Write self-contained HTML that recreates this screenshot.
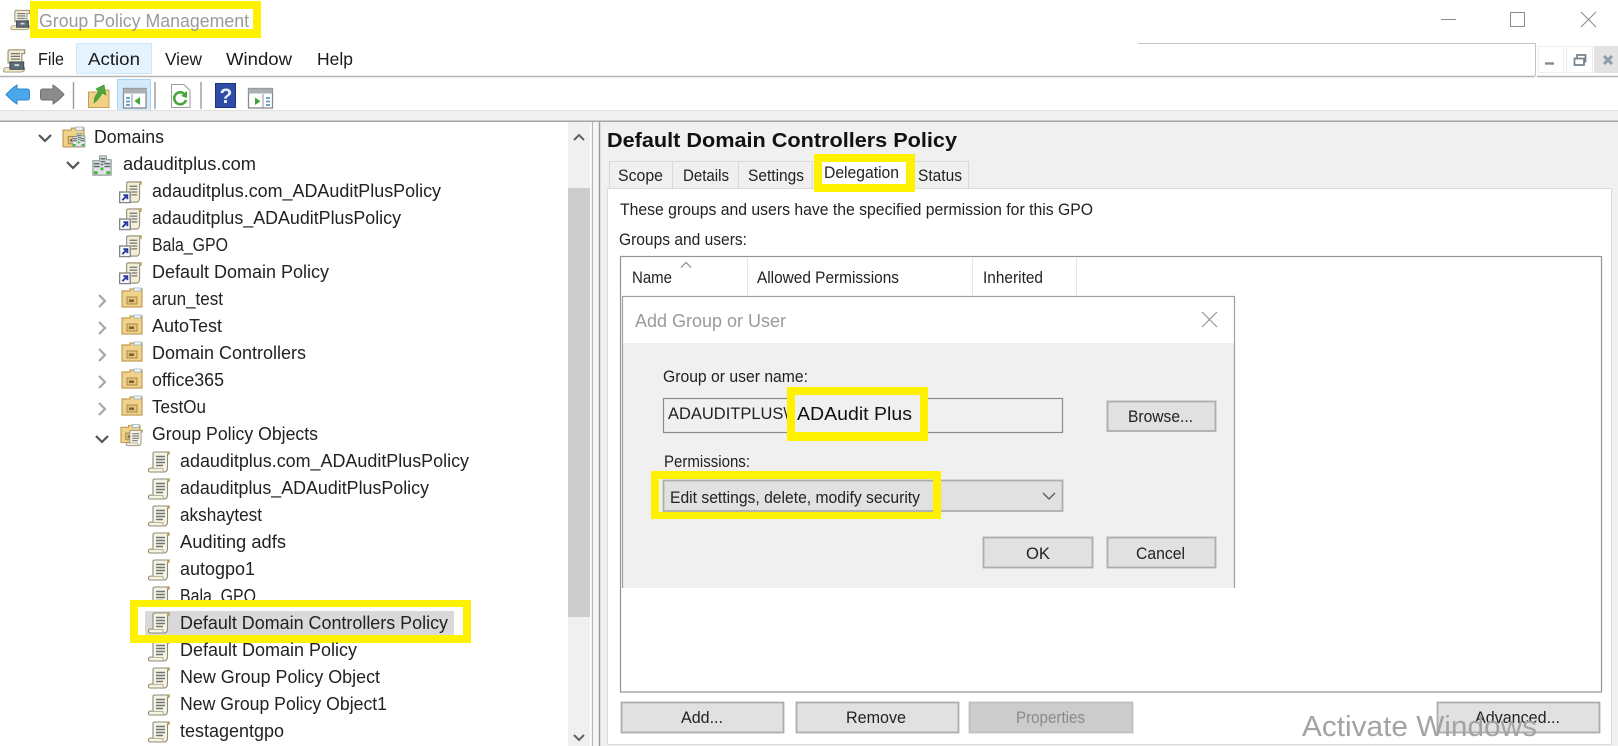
<!DOCTYPE html>
<html><head><meta charset="utf-8"><title>Group Policy Management</title>
<style>
html,body{margin:0;padding:0;background:#fff;width:1618px;height:746px;overflow:hidden}
svg{display:block;filter:blur(.35px)}
text{font-family:"Liberation Sans",sans-serif;fill:#1a1a1a;font-size:17.5px}
.t{font-size:18px;fill:#222}
.r{font-size:16.5px;fill:#222}
.b{fill:#e1e1e1;stroke:#adadad;stroke-width:1.8}
</style></head><body>
<svg width="1618" height="746" viewBox="0 0 1618 746" xmlns="http://www.w3.org/2000/svg">
<defs>
<symbol id="scroll" viewBox="0 0 22 22" overflow="visible">
<path d="M5 2.5Q5 1 7 1H21L19.5 3.5V16.5Q19.5 20 17 21H2Q0 20.5 .5 18.5Q1 17 3.5 17H5Z" fill="#f7f3e2" stroke="#8d8b78" stroke-width="1.1"/>
<path d="M8 5.5H17M8 8.5H17M8 11.5H17M8 14.5H15" stroke="#6f7478" stroke-width="1.4"/>
<path d="M3.5 17.5H15Q14.5 19.5 16.5 21" fill="none" stroke="#b8b49a" stroke-width="1.1"/>
<path d="M19 1.5L21 1V4" fill="none" stroke="#b49a45" stroke-width="1.2"/>
</symbol>
<symbol id="link" viewBox="0 0 24 24" overflow="visible">
<path d="M8 2.5Q8 1 10 1H23L21.5 3.5V17Q21.5 21 19 22H10V17H8Z" fill="#f5eed6" stroke="#8d8b78" stroke-width="1.1"/>
<path d="M11 5.5H19M11 8.5H19M13 11.5H19M13 14.5H19" stroke="#6f7478" stroke-width="1.3"/>
<path d="M20 1.5L23 1V4" fill="none" stroke="#b49a45" stroke-width="1.2"/>
<rect x=".7" y="11.5" width="11" height="11" fill="#fff" stroke="#7f8488" stroke-width="1.4"/>
<path d="M3.5 20L8 15.5M4.5 14.8H8.7V19" fill="none" stroke="#2b3a9b" stroke-width="2"/>
</symbol>
<symbol id="ou" viewBox="0 0 22 20" overflow="visible">
<path d="M1 3H9V1H21V19H1Z" fill="#f0d28a" stroke="#c29e58" stroke-width="1.2"/>
<path d="M13 0H20V3H13Z" fill="#f7f7f7" stroke="#8fb0cc" stroke-width=".8"/>
<rect x="6" y="9" width="10" height="7" fill="#e5c27a" stroke="#a88a4a"/>
<rect x="8" y="11.5" width="5" height="2.500" fill="#7a6234"/>
</symbol>
<symbol id="srv" viewBox="0 0 24 24" overflow="visible">
<path d="M9 2H16V6H21V22H2V7H9Z" fill="#dfe4e6" stroke="#7d8a8c"/>
<path d="M3 10H9M3 13H9M14 10H20M14 13H20M10 5H15M10 8H15M10 11H13" stroke="#5f6b6e" stroke-width="1.6"/>
<rect x="3" y="18" width="4" height="3" fill="#47b53a"/><rect x="16" y="18" width="4" height="3" fill="#47b53a"/><rect x="10" y="14" width="3" height="3" fill="#47b53a"/>
</symbol>
<symbol id="bigscroll" viewBox="0 0 26 26" overflow="visible">
<path d="M6 3Q6 1 8 1H24V5L21 5V15H6Z" fill="#f3ecd3" stroke="#8a8468" stroke-width="1.1"/>
<path d="M9 5H19M9 8H19M9 11H19" stroke="#6f7478" stroke-width="1.3"/>
<path d="M1 24Q1 20 5 20H24V23Q22 25 20 25H2Z" fill="#efe6c6" stroke="#a59c7a"/>
<rect x="8" y="14" width="15" height="8" fill="#5e6b75" stroke="#39434b"/>
<rect x="13" y="16.5" width="5" height="2" fill="#d8dde0"/>
</symbol>
</defs>

<rect width="1618" height="746" fill="#fff"/>

<!-- title bar -->
<use href="#bigscroll" x="10" y="8" width="21" height="24"/>
<path d="M30 1H261V38H30ZM38 9V29H253V9Z" fill="#fff200" fill-rule="evenodd"/>
<text x="39" y="27" textLength="210" lengthAdjust="spacingAndGlyphs" style="font-size:18.5px;fill:#9a9a9a">Group Policy Management</text>
<path d="M1441 19.5H1456" stroke="#8a8a8a" stroke-width="1"/>
<rect x="1510.5" y="12.5" width="14" height="14" fill="none" stroke="#8a8a8a"/>
<path d="M1581 12L1596 27M1596 12L1581 27" stroke="#8a8a8a" stroke-width="1"/>

<!-- menu -->
<use href="#bigscroll" x="2" y="49" width="25" height="24"/>
<rect x="76.5" y="43.5" width="75" height="30" fill="#e5f3ff" stroke="#cce8ff"/>
<text x="38" y="65" textLength="26" lengthAdjust="spacingAndGlyphs">File</text>
<text x="88" y="65" textLength="52" lengthAdjust="spacingAndGlyphs">Action</text>
<text x="165" y="65" textLength="37" lengthAdjust="spacingAndGlyphs">View</text>
<text x="226" y="65" textLength="66" lengthAdjust="spacingAndGlyphs">Window</text>
<text x="317" y="65" textLength="36" lengthAdjust="spacingAndGlyphs">Help</text>
<path d="M1138 43.5H1535.5V76" fill="none" stroke="#c4c4c4"/>
<path d="M0 76.5H1535M1537 76.5H1618" stroke="#b4b4b4" stroke-width="1.4"/>
<rect x="1538.5" y="46.5" width="25" height="26" fill="#fff" stroke="#eeeeee"/>
<rect x="1566.5" y="46.5" width="26" height="26" fill="#fff" stroke="#eeeeee"/>
<rect x="1594" y="46" width="24" height="27" fill="#e2e2e2"/>
<path d="M1545 63.5H1554" stroke="#7f8b96" stroke-width="2.4"/>
<path d="M1574.5 58.5H1584V65H1574.5ZM1577 58V55H1585.5V61.5H1584" fill="none" stroke="#74828e" stroke-width="1.7"/>
<path d="M1604 56L1612 64M1612 56L1604 64" stroke="#8c9cab" stroke-width="3"/>

<!-- toolbar -->
<path d="M6 94.5Q12 88 17 85V89H27Q29.500 89 29.500 91.500V97.500Q29.500 100 27 100H17V104Q12 101 6 94.500Z" fill="#4ba6ea" stroke="#2f86cc"/>
<path d="M64 94.500Q58 88 53 85V89H43Q40.500 89 40.500 91.500V97.500Q40.500 100 43 100H53V104Q58 101 64 94.500Z" fill="#8b8b8b" stroke="#6f6f6f"/>
<path d="M73.500 82V109" stroke="#9a9a9a" stroke-width="1.400"/>
<path d="M88.500 92H100L103 90H109V107.500H88.500Z" fill="#f1d186" stroke="#c29e58"/>
<path d="M94 103Q94 95 99 92L96 89L104 85L106 95L102 93Q100 98 94 103Z" fill="#4fa83d" stroke="#3a8c2d" stroke-width=".6"/>
<rect x="117.500" y="79.500" width="33" height="31" fill="#d4eafb" stroke="#a8d4f5"/>
<rect x="123.500" y="88.500" width="22.500" height="19.500" fill="#fff" stroke="#85898c" stroke-width="1.300"/>
<rect x="123.500" y="88.500" width="22.500" height="5" fill="#a9afb2"/>
<path d="M126 98H130M126 101.500H130M126 105H130" stroke="#5b9ac0" stroke-width="1.800"/>
<path d="M132 94V108" stroke="#8e969a"/>
<path d="M140 97V105L134.500 101Z" fill="#3da52f"/>
<path d="M155 82V109" stroke="#9a9a9a" stroke-width="1.400"/>
<path d="M171.500 84.500H184L190 90.500V107.500H171.500Z" fill="#fff" stroke="#9a9a9a"/>
<path d="M184.500 94A6 6 0 1 0 186 100" fill="none" stroke="#47a73a" stroke-width="2.600"/>
<path d="M181 96L187 91V98Z" fill="#47a73a"/>
<path d="M201 82V109" stroke="#9a9a9a" stroke-width="1.400"/>
<rect x="215.500" y="83.500" width="20" height="24" fill="#2f4da6" stroke="#1d3277"/>
<text x="219.500" y="103" style="font-size:21px;font-weight:bold;fill:#e8eefc">?</text>
<rect x="248.500" y="88.500" width="24" height="19.500" fill="#fff" stroke="#85898c" stroke-width="1.300"/>
<rect x="248.500" y="88.500" width="24" height="5" fill="#a9afb2"/>
<path d="M255 97.500V105L260.500 101.200Z" fill="#3da52f"/>
<path d="M263 94V108" stroke="#8e969a"/>
<path d="M266 98H270M266 101.500H270M266 105H270" stroke="#5b9ac0" stroke-width="1.800"/>
<rect x="0" y="110" width="1618" height="1" fill="#e2e2e2"/>
<rect x="0" y="111" width="1618" height="10" fill="#f0f0f0"/>
<rect x="0" y="120.500" width="1618" height="1.500" fill="#a6a6a6"/>

<!-- tree panel scrollbar -->
<rect x="568" y="122" width="22" height="624" fill="#f0f0f0"/>
<rect x="568" y="188" width="22" height="429" fill="#cdcdcd"/>
<path d="M574 140L579 135L584 140M574 735L579 740L584 735" fill="none" stroke="#606060" stroke-width="2"/>
<path d="M592.500 122V746" stroke="#b5b5b5" stroke-width="1.400"/>
<rect x="593" y="122" width="6" height="624" fill="#f5f5f5"/>

<!-- tree chevrons -->
<g fill="none" stroke="#555" stroke-width="2.200">
<path d="M39 135L45 141L51 135M67 162L73 168L79 162M96 436L102 442L108 436"/>
</g>
<g fill="none" stroke="#a8a8a8" stroke-width="2.200">
<path d="M99 295L105 301L99 307M99 322L105 328L99 334M99 349L105 355L99 361M99 376L105 382L99 388M99 403L105 409L99 415"/>
</g>
<!-- tree icons -->
<use href="#ou" x="62" y="127" width="23" height="21"/><use href="#srv" x="71" y="131" width="16" height="18"/>
<use href="#srv" x="91" y="154" width="23" height="23"/>
<use href="#link" x="119" y="181" width="23" height="23"/>
<use href="#link" x="119" y="208" width="23" height="23"/>
<use href="#link" x="119" y="235" width="23" height="23"/>
<use href="#link" x="119" y="262" width="23" height="23"/>
<use href="#ou" x="121" y="288" width="22" height="20"/>
<use href="#ou" x="121" y="315" width="22" height="20"/>
<use href="#ou" x="121" y="342" width="22" height="20"/>
<use href="#ou" x="121" y="369" width="22" height="20"/>
<use href="#ou" x="121" y="396" width="22" height="20"/>
<use href="#ou" x="120" y="424" width="21" height="20"/><use href="#scroll" x="126" y="429" width="17" height="18"/>
<use href="#scroll" x="148" y="451" width="22" height="22"/>
<use href="#scroll" x="148" y="478" width="22" height="22"/>
<use href="#scroll" x="148" y="505" width="22" height="22"/>
<use href="#scroll" x="148" y="532" width="22" height="22"/>
<use href="#scroll" x="148" y="559" width="22" height="22"/>
<use href="#scroll" x="148" y="586" width="22" height="22"/>
<use href="#scroll" x="148" y="640" width="22" height="22"/>

<!-- tree text -->
<g class="tree">
<text class="t" x="94" y="143" textLength="70" lengthAdjust="spacingAndGlyphs">Domains</text>
<text class="t" x="123" y="170" textLength="133" lengthAdjust="spacingAndGlyphs">adauditplus.com</text>
<text class="t" x="152" y="197" textLength="289" lengthAdjust="spacingAndGlyphs">adauditplus.com_ADAuditPlusPolicy</text>
<text class="t" x="152" y="224" textLength="249" lengthAdjust="spacingAndGlyphs">adauditplus_ADAuditPlusPolicy</text>
<text class="t" x="152" y="251" textLength="76" lengthAdjust="spacingAndGlyphs">Bala_GPO</text>
<text class="t" x="152" y="278" textLength="177" lengthAdjust="spacingAndGlyphs">Default Domain Policy</text>
<text class="t" x="152" y="305" textLength="71" lengthAdjust="spacingAndGlyphs">arun_test</text>
<text class="t" x="152" y="332" textLength="70" lengthAdjust="spacingAndGlyphs">AutoTest</text>
<text class="t" x="152" y="359" textLength="154" lengthAdjust="spacingAndGlyphs">Domain Controllers</text>
<text class="t" x="152" y="386" textLength="72" lengthAdjust="spacingAndGlyphs">office365</text>
<text class="t" x="152" y="413" textLength="54" lengthAdjust="spacingAndGlyphs">TestOu</text>
<text class="t" x="152" y="440" textLength="166" lengthAdjust="spacingAndGlyphs">Group Policy Objects</text>
<text class="t" x="180" y="467" textLength="289" lengthAdjust="spacingAndGlyphs">adauditplus.com_ADAuditPlusPolicy</text>
<text class="t" x="180" y="494" textLength="249" lengthAdjust="spacingAndGlyphs">adauditplus_ADAuditPlusPolicy</text>
<text class="t" x="180" y="521" textLength="82" lengthAdjust="spacingAndGlyphs">akshaytest</text>
<text class="t" x="180" y="548" textLength="106" lengthAdjust="spacingAndGlyphs">Auditing adfs</text>
<text class="t" x="180" y="575" textLength="75" lengthAdjust="spacingAndGlyphs">autogpo1</text>
<text class="t" x="180" y="602" textLength="76" lengthAdjust="spacingAndGlyphs">Bala_GPO</text>
</g>
<!-- selected row -->
<rect x="138" y="607" width="325" height="28" fill="#fff"/>
<rect x="145" y="611" width="309" height="24" fill="#d9d9d9"/>
<path d="M130 600H471V643H130ZM138 607V635H463V607Z" fill="#fff200" fill-rule="evenodd"/>
<use href="#scroll" x="148" y="612" width="22" height="22"/>
<text class="t" x="180" y="629" textLength="268" lengthAdjust="spacingAndGlyphs">Default Domain Controllers Policy</text>
<use href="#scroll" x="148" y="667" width="22" height="22"/>
<use href="#scroll" x="148" y="694" width="22" height="22"/>
<use href="#scroll" x="148" y="721" width="22" height="22"/>
<text class="t" x="180" y="656" textLength="177" lengthAdjust="spacingAndGlyphs">Default Domain Policy</text>
<text class="t" x="180" y="683" textLength="200" lengthAdjust="spacingAndGlyphs">New Group Policy Object</text>
<text class="t" x="180" y="710" textLength="207" lengthAdjust="spacingAndGlyphs">New Group Policy Object1</text>
<text class="t" x="180" y="737" textLength="104" lengthAdjust="spacingAndGlyphs">testagentgpo</text>

<!-- right pane -->
<rect x="599" y="122" width="1019" height="624" fill="#f0f0f0"/>
<path d="M599.500 122V746" stroke="#9a9a9a" stroke-width="1.400"/>
<rect x="1613" y="122" width="5" height="624" fill="#f0f0f0"/>
<text x="607" y="147" textLength="350" lengthAdjust="spacingAndGlyphs" style="font-size:20px;font-weight:bold;fill:#111">Default Domain Controllers Policy</text>
<rect x="607.500" y="188.500" width="1004" height="556" fill="#fff" stroke="#dadada"/>
<!-- tabs -->
<path d="M609.500 188V161.500H672.500V188M672.500 161.500H738.500V188M738.500 161.500H812V188M915 161.500H968.500V188" fill="#f0f0f0" stroke="#d9d9d9"/>
<text class="r" x="618" y="181" textLength="45" lengthAdjust="spacingAndGlyphs">Scope</text>
<text class="r" x="683" y="181" textLength="46" lengthAdjust="spacingAndGlyphs">Details</text>
<text class="r" x="748" y="181" textLength="56" lengthAdjust="spacingAndGlyphs">Settings</text>
<text class="r" x="918" y="181" textLength="44" lengthAdjust="spacingAndGlyphs">Status</text>
<rect x="822" y="162" width="84" height="22" fill="#fff"/>
<path d="M814 154H915V192H814ZM822 162V184H906V162Z" fill="#fff200" fill-rule="evenodd"/>
<text class="r" x="824" y="178" textLength="75" lengthAdjust="spacingAndGlyphs">Delegation</text>

<text class="r" x="620" y="215" textLength="473" lengthAdjust="spacingAndGlyphs">These groups and users have the specified permission for this GPO</text>
<text class="r" x="619" y="245" textLength="128" lengthAdjust="spacingAndGlyphs">Groups and users:</text>

<!-- list -->
<rect x="620.500" y="256.500" width="981" height="435.500" fill="#fff" stroke="#8f979d" stroke-width="1.200"/>
<path d="M747.500 258V296M972.500 258V296M1076.500 258V296" stroke="#e6e6e6"/>
<path d="M681 267.500L686 262.500L691 267.500" fill="none" stroke="#8a8a8a" stroke-width="1.200"/>
<text class="r" x="632" y="283" textLength="40" lengthAdjust="spacingAndGlyphs">Name</text>
<text class="r" x="757" y="283" textLength="142" lengthAdjust="spacingAndGlyphs">Allowed Permissions</text>
<text class="r" x="983" y="283" textLength="60" lengthAdjust="spacingAndGlyphs">Inherited</text>

<!-- bottom buttons -->
<rect class="b" x="621.500" y="702.500" width="162" height="30"/>
<rect class="b" x="796.500" y="702.500" width="162" height="30"/>
<rect x="969.500" y="702.500" width="163" height="30" fill="#cccccc" stroke="#bfbfbf" stroke-width="1.800"/>
<rect class="b" x="1437.500" y="702.500" width="162" height="30"/>
<text class="r" x="681" y="723" textLength="42" lengthAdjust="spacingAndGlyphs">Add...</text>
<text class="r" x="846" y="723" textLength="60" lengthAdjust="spacingAndGlyphs">Remove</text>
<text class="r" x="1016" y="723" textLength="69" lengthAdjust="spacingAndGlyphs" style="fill:#8a8a8a">Properties</text>
<text class="r" x="1475" y="723" textLength="85" lengthAdjust="spacingAndGlyphs">Advanced...</text>
<text x="1302" y="736" textLength="235" lengthAdjust="spacingAndGlyphs" style="font-size:29px;fill:#a3a3a3">Activate Windows</text>

<!-- dialog -->
<rect x="622" y="296" width="613" height="292" fill="#fff"/>
<rect x="623" y="343" width="611" height="245" fill="#f0f0f0"/>
<path d="M622.500 588V296.500H1234.500V588" fill="none" stroke="#a0a0a0" stroke-width="1.200"/>
<text x="635" y="327" textLength="151" lengthAdjust="spacingAndGlyphs" style="font-size:18px;fill:#9a9a9a">Add Group or User</text>
<path d="M1202 312L1217 327M1217 312L1202 327" stroke="#8a8a8a" stroke-width="1"/>
<text class="r" x="663" y="382" textLength="145" lengthAdjust="spacingAndGlyphs">Group or user name:</text>
<rect x="663.500" y="398.500" width="399" height="34" fill="#f0f0f0" stroke="#8a8a8a" stroke-width="1.200"/>
<text class="r" x="668" y="419" textLength="120" lengthAdjust="spacingAndGlyphs">ADAUDITPLUS\</text>
<rect x="795" y="395" width="125" height="37" fill="#f0f0f0"/>
<path d="M787 387H928V441H787ZM795 395V432H920V395Z" fill="#fff200" fill-rule="evenodd"/>
<text x="797" y="420" textLength="115" lengthAdjust="spacingAndGlyphs" style="font-size:18px;fill:#111">ADAudit Plus</text>
<rect class="b" x="1107.500" y="401.500" width="108" height="29.500"/>
<text class="r" x="1128" y="422" textLength="65" lengthAdjust="spacingAndGlyphs">Browse...</text>
<text class="r" x="664" y="467" textLength="86" lengthAdjust="spacingAndGlyphs">Permissions:</text>
<rect class="b" x="663.500" y="480.500" width="399" height="30.500"/>
<path d="M1043 493L1049 499L1055 493" fill="none" stroke="#555" stroke-width="1.300"/>
<path d="M651 471H941V519H651ZM659 479V512H933V479Z" fill="#fff200" fill-rule="evenodd"/>
<text class="r" x="670" y="503" textLength="250" lengthAdjust="spacingAndGlyphs">Edit settings, delete, modify security</text>
<rect class="b" x="983.500" y="537.500" width="109" height="30"/>
<rect class="b" x="1107.500" y="537.500" width="108" height="30"/>
<text class="r" x="1026" y="559" textLength="24" lengthAdjust="spacingAndGlyphs">OK</text>
<text class="r" x="1136" y="559" textLength="49" lengthAdjust="spacingAndGlyphs">Cancel</text>
</svg>
</body></html>
